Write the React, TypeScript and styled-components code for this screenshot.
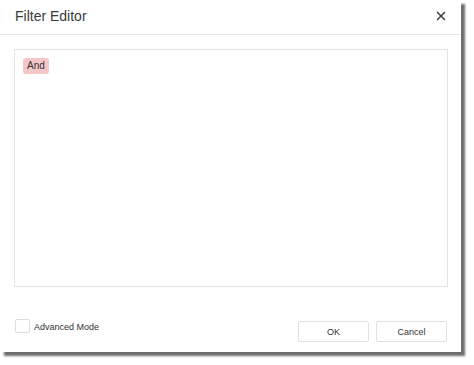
import React from 'react';
import styled, { createGlobalStyle } from 'styled-components';

const GlobalStyle = createGlobalStyle`
  html, body {
    margin: 0;
    padding: 0;
    background: #ffffff;
    font-family: "Liberation Sans", Arial, sans-serif;
    color: #333333;
  }
  body {
    min-height: 100vh;
  }
`;

const Page = styled.div`
  padding-bottom: 13px;
`;

const Dialog = styled.div`
  width: 461px;
  height: 352px;
  background: #ffffff;
  box-shadow: 4px 4px 2px rgba(60, 60, 60, 0.75);
  display: flex;
  flex-direction: column;
  box-sizing: border-box;
`;

const Header = styled.div`
  height: 35px;
  box-sizing: border-box;
  border-bottom: 1px solid #e6e6e6;
  display: flex;
  align-items: center;
  justify-content: space-between;
  padding: 0 14px 2px 15px;
`;

const Title = styled.h1`
  margin: 0;
  font-size: 14px;
  font-weight: normal;
  color: #3a3a3a;
`;

const CloseButton = styled.button`
  border: none;
  background: none;
  padding: 0;
  width: 12px;
  height: 12px;
  display: flex;
  align-items: center;
  justify-content: center;
  cursor: pointer;
`;

const Body = styled.div`
  padding: 14px 13px 0 14px;
  display: flex;
  flex-direction: column;
`;

const Panel = styled.div`
  height: 238px;
  box-sizing: border-box;
  border: 1px solid #e2e2e2;
  padding: 8px;
  display: flex;
  align-items: flex-start;
`;

const GroupTag = styled.span`
  background: #f4c6c6;
  color: #333333;
  font-size: 10px;
  line-height: 16px;
  padding: 0 4px;
  border-radius: 3px;
`;

const Footer = styled.div`
  display: flex;
  justify-content: space-between;
  align-items: flex-start;
  padding: 32px 14px 0 15px;
`;

const CheckLabel = styled.label`
  display: flex;
  align-items: center;
  gap: 4px;
  font-size: 9px;
  color: #333333;
`;

const CheckBox = styled.span`
  width: 15px;
  height: 14px;
  border: 1px solid #dcdcdc;
  border-radius: 2px;
  box-sizing: border-box;
  display: inline-block;
`;

const LabelText = styled.span`
  padding-top: 2px;
`;

const Buttons = styled.div`
  display: flex;
  gap: 7px;
  padding-top: 2px;
`;

const Button = styled.button`
  width: 71px;
  height: 21px;
  background: #ffffff;
  border: 1px solid #e0e0e0;
  border-radius: 2px;
  font-family: "Liberation Sans", Arial, sans-serif;
  font-size: 9px;
  color: #333333;
  padding: 0;
`;

const App: React.FC = () => {
  return (
    <Page>
      <GlobalStyle />
      <Dialog>
        <Header>
          <Title>Filter Editor</Title>
          <CloseButton aria-label="Close">
            <svg width="10" height="10" viewBox="0 0 10 10">
              <path d="M1 1 L9 9 M9 1 L1 9" stroke="#333" strokeWidth="1.4" />
            </svg>
          </CloseButton>
        </Header>
        <Body>
          <Panel>
            <GroupTag>And</GroupTag>
          </Panel>
        </Body>
        <Footer>
          <CheckLabel>
            <CheckBox />
            <LabelText>Advanced Mode</LabelText>
          </CheckLabel>
          <Buttons>
            <Button>OK</Button>
            <Button>Cancel</Button>
          </Buttons>
        </Footer>
      </Dialog>
    </Page>
  );
};

export default App;
